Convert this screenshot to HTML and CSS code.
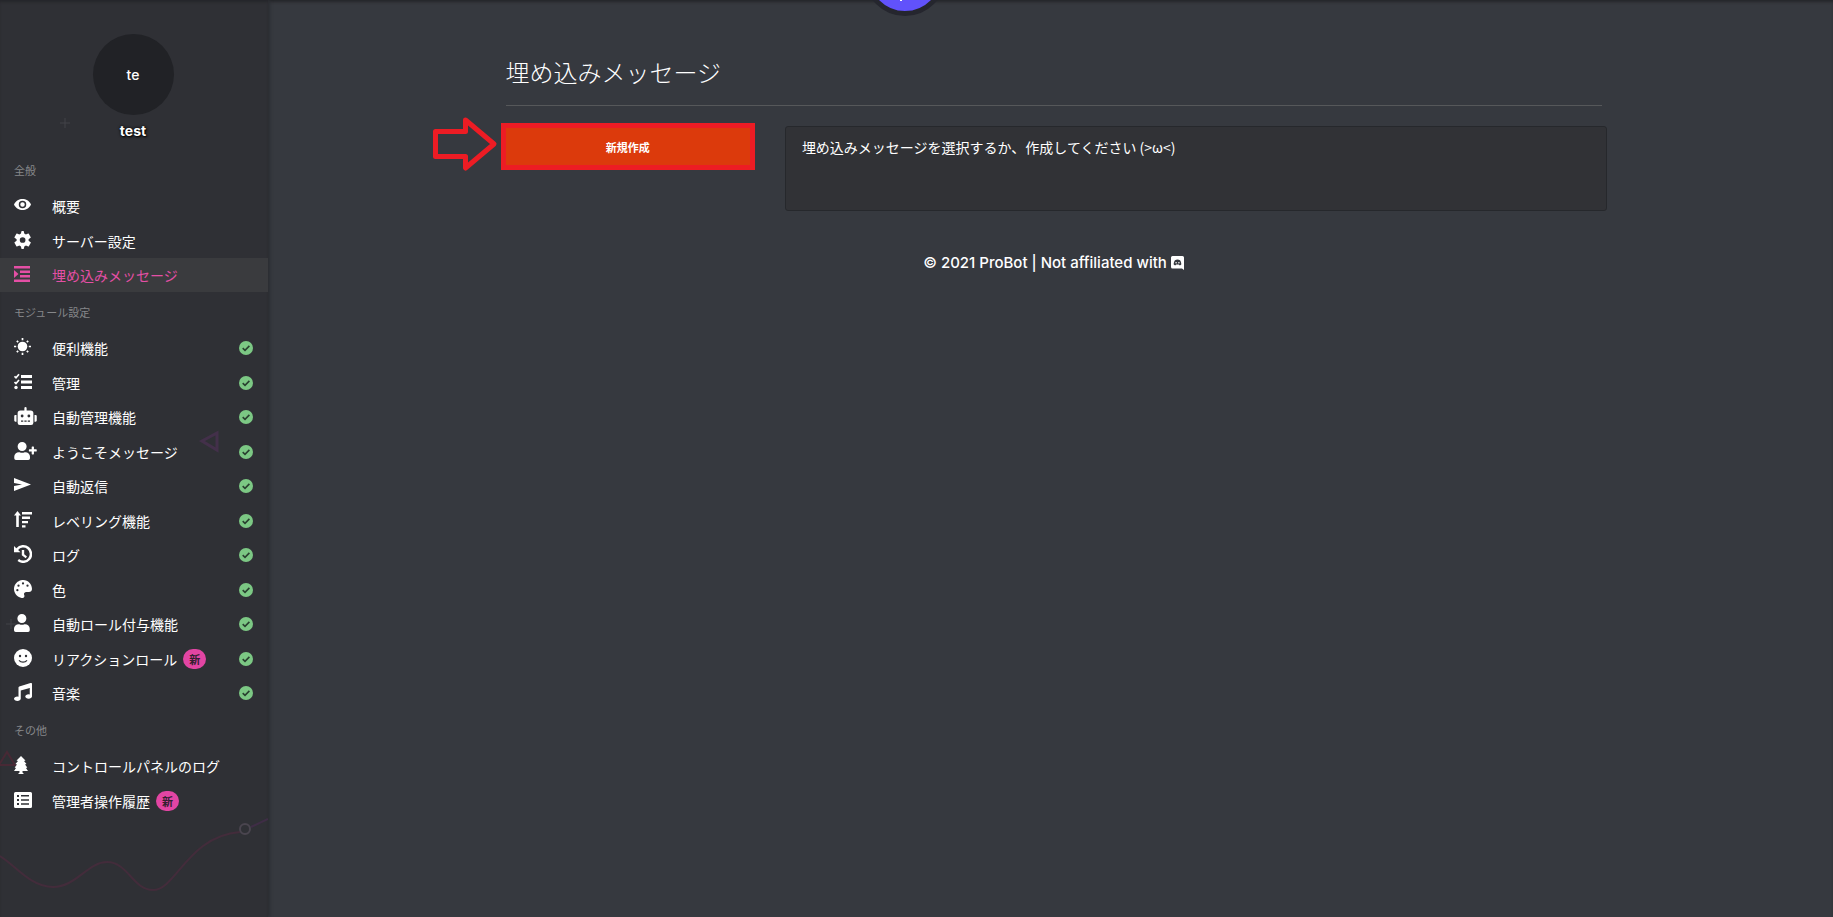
FILE: index.html
```html
<!DOCTYPE html>
<html lang="ja">
  <head>
    <meta charset="UTF-8" />
    <meta name="viewport" content="width=device-width, initial-scale=1.0" />
    <title>埋め込みメッセージ</title>
    <link rel="stylesheet" href="styles.css">
  </head>
  <body>
    <!-- shared status icon -->
    <svg class="defs" width="0" height="0">
      <symbol id="check" viewBox="0 0 14 14">
        <circle cx="7" cy="7" r="7" fill="#7cc884"/>
        <path d="M3.700 7.200l2.300 2.200 4.400-4.500" fill="none" stroke="#2a4030" stroke-width="1.600"/>
      </symbol>
    </svg>

    <div class="top-badge" aria-hidden="true"></div>

    <div class="wrapper">
      <aside class="sidebar">
        <svg class="doodles" width="268" height="917" viewBox="0 0 268 917" fill="none" aria-hidden="true">
          <path d="M65 118v10M60 123h10M11 619v10M6 624h10" stroke="#424348" stroke-width="1"/>
          <path d="M202 441l15-8v17z" stroke="#43304a" stroke-width="3"/>
          <path d="M-1 765l8-13 8 13z" stroke="#482935" stroke-width="2"/>
          <path d="M0 856C14 864 30 887 53 887C76 887 88 862 107 862C128 862 133 890 153 890C176 890 188 836 240 832" stroke="#432c3b" stroke-width="2"/>
          <path d="M251 827L268 819" stroke="#3f2d46" stroke-width="2"/>
          <circle cx="245" cy="829" r="5" stroke="#4a454f" stroke-width="2"/>
        </svg>

        <div class="guild">
          <div class="avatar">te</div>
          <div class="guild-name">test</div>
        </div>

        <nav>
          <h2 class="section">全般</h2>
          <ul class="menu">
            <li><a href="#">
              <svg class="icon" viewBox="0 0 18 18"><path d="M0 8.500C2 4.500 5 3 8.500 3S15 4.500 17 8.500C15 12.500 12 14 8.500 14S2 12.500 0 8.500z"/><circle cx="8.500" cy="8.500" r="3" fill="#fff" stroke="#2f3035" stroke-width="1.500"/></svg>
              <span class="label">概要</span>
            </a></li>
            <li><a href="#">
              <svg class="icon" viewBox="0 0 24 24"><path d="M19.400 13c0-.3.100-.6.100-1s0-.7-.1-1l2.700-2a.6.6 0 0 0 .2-.8l-2.600-4.500a.7.7 0 0 0-.8-.3l-3.100 1.300a8 8 0 0 0-2.200-1.300L13.200.6a.7.7 0 0 0-.7-.6h-2a.7.7 0 0 0-.7.600l-.5 2.800a8 8 0 0 0-2.200 1.300L4 3.400a.7.7 0 0 0-.8.300L.6 8.200A.6.6 0 0 0 .8 9l2.700 2a8 8 0 0 0 0 2L.8 15a.6.6 0 0 0-.2.800l2.600 4.500c.2.300.5.400.8.300l3.100-1.300a8 8 0 0 0 2.200 1.300l.5 2.800c0 .3.300.6.700.6h2c.4 0 .7-.3.7-.6l.5-2.800a8 8 0 0 0 2.200-1.300l3.100 1.300c.3.100.6 0 .8-.3l2.600-4.500a.6.6 0 0 0-.2-.8zM11.500 15.800a3.800 3.800 0 1 1 0-7.600 3.800 3.800 0 0 1 0 7.600z"/></svg>
              <span class="label">サーバー設定</span>
            </a></li>
            <li><a href="#" class="active" aria-current="page">
              <svg class="icon" viewBox="0 0 18 18"><path d="M0 1h16v2.500H0zM6 5.500h10V8H6zM6 10h10v2.500H6zM0 14.500h16V17H0zM0 5l4.500 4L0 13z"/></svg>
              <span class="label">埋め込みメッセージ</span>
            </a></li>
          </ul>

          <h2 class="section">モジュール設定</h2>
          <ul class="menu">
            <li><a href="#">
              <svg class="icon" viewBox="0 0 18 18"><circle cx="8.500" cy="8.500" r="4.800"/><path d="M8.500 0v2.200M8.500 14.800V17M0 8.500h2.200M14.800 8.500H17M2.800 2.800l1.400 1.400M12.800 12.800l1.400 1.400M2.800 14.200l1.400-1.400M12.800 4.200l1.400-1.400" stroke="currentColor" stroke-width="1.700"/></svg>
              <span class="label">便利機能</span><svg class="check"><use href="#check"/></svg>
            </a></li>
            <li><a href="#">
              <svg class="icon" viewBox="0 0 18 18"><path d="M7 2h11v3H7zM7 7.500h11v3H7zM7 13h11v3H7z"/><circle cx="2" cy="14.500" r="1.700"/><path d="M.5 3.300l1.500 1.500L5 1.300M.5 9l1.500 1.500L5 7" fill="none" stroke="currentColor" stroke-width="1.700"/></svg>
              <span class="label">管理</span><svg class="check"><use href="#check"/></svg>
            </a></li>
            <li><a href="#">
              <svg class="icon wide" viewBox="0 0 640 512"><path fill-rule="evenodd" d="M32 224h32v192H32a32 32 0 0 1-32-32V256a32 32 0 0 1 32-32zm512-48v272a64 64 0 0 1-64 64H160a64 64 0 0 1-64-64V176a80 80 0 0 1 80-80h112V32a32 32 0 0 1 64 0v64h112a80 80 0 0 1 80 80zM264 256a40 40 0 1 0-80 0 40 40 0 0 0 80 0zm-8 128h-64v32h64zm96 0h-64v32h64zm104-128a40 40 0 1 0-80 0 40 40 0 0 0 80 0zm-8 128h-64v32h64zm192-128v128a32 32 0 0 1-32 32h-32V224h32a32 32 0 0 1 32 32z"/></svg>
              <span class="label">自動管理機能</span><svg class="check"><use href="#check"/></svg>
            </a></li>
            <li><a href="#">
              <svg class="icon wide" viewBox="0 0 640 512"><path d="M624 208h-64v-64c0-9-7-16-16-16h-32c-9 0-16 7-16 16v64h-64c-9 0-16 7-16 16v32c0 9 7 16 16 16h64v64c0 9 7 16 16 16h32c9 0 16-7 16-16v-64h64c9 0 16-7 16-16v-32c0-9-7-16-16-16zM224 256a128 128 0 1 0 0-256 128 128 0 0 0 0 256zm90 32h-17a174 174 0 0 1-146 0h-17A134 134 0 0 0 0 422v42a48 48 0 0 0 48 48h352a48 48 0 0 0 48-48v-42a134 134 0 0 0-134-134z"/></svg>
              <span class="label">ようこそメッセージ</span><svg class="check"><use href="#check"/></svg>
            </a></li>
            <li><a href="#">
              <svg class="icon" viewBox="0 0 18 18"><path d="M0 2l17 6.500L0 15v-5l8-1.500L0 7z"/></svg>
              <span class="label">自動返信</span><svg class="check"><use href="#check"/></svg>
            </a></li>
            <li><a href="#">
              <svg class="icon" viewBox="0 0 18 18"><path d="M3.500 0L7 4.500H4.800V16H2.200V4.500H0zM8 1h10v2.500H8zM8 5.500h8V8H8zM8 10h6v2.300H8zM8 14.300h3.500v2.200H8z"/></svg>
              <span class="label">レベリング機能</span><svg class="check"><use href="#check"/></svg>
            </a></li>
            <li><a href="#">
              <svg class="icon" viewBox="0 0 18 18"><path d="M0 1l2.300 2.300A9 9 0 1 1 3.500 16L5 14A6.500 6.500 0 1 0 4.100 5L6.500 7.300H0zM7.800 5h2.400v4.300l2.800 2.100-1.300 1.900-3.900-3z"/></svg>
              <span class="label">ログ</span><svg class="check"><use href="#check"/></svg>
            </a></li>
            <li><a href="#">
              <svg class="icon" viewBox="0 0 512 512"><path fill-rule="evenodd" d="M204 5C105 24 25 104 5 203c-37 188 131 327 247 308 37-6 56-50 39-83-21-41 9-89 55-89h80c47 0 86-39 86-86C511 96 369-27 204 5zM96 320a32 32 0 1 1 0-64 32 32 0 0 1 0 64zm32-128a32 32 0 1 1 0-64 32 32 0 0 1 0 64zm128-64a32 32 0 1 1 0-64 32 32 0 0 1 0 64zm128 64a32 32 0 1 1 0-64 32 32 0 0 1 0 64z"/></svg>
              <span class="label">色</span><svg class="check"><use href="#check"/></svg>
            </a></li>
            <li><a href="#">
              <svg class="icon" viewBox="0 0 512 512"><path d="M224 256a128 128 0 1 0 0-256 128 128 0 0 0 0 256zm90 32h-17a174 174 0 0 1-146 0h-17A134 134 0 0 0 0 422v42a48 48 0 0 0 48 48h352a48 48 0 0 0 48-48v-42a134 134 0 0 0-134-134z"/></svg>
              <span class="label">自動ロール付与機能</span><svg class="check"><use href="#check"/></svg>
            </a></li>
            <li><a href="#">
              <svg class="icon" viewBox="0 0 18 18"><circle cx="9" cy="9" r="9"/><circle cx="6" cy="7" r="1.200" fill="#2f3035"/><circle cx="12" cy="7" r="1.200" fill="#2f3035"/><path d="M5 11.300c2 2.500 6 2.500 8 0" fill="none" stroke="#2f3035" stroke-width="1.200"/></svg>
              <span class="label">リアクションロール</span><span class="badge">新</span><svg class="check"><use href="#check"/></svg>
            </a></li>
            <li><a href="#">
              <svg class="icon" viewBox="0 0 512 512"><path d="M470 2L150 96a32 32 0 0 0-22 31v261a149 149 0 0 0-32-4c-53 0-96 29-96 64s43 64 96 64 96-29 96-64V214l256-75v185a149 149 0 0 0-32-4c-53 0-96 29-96 64s43 64 96 64 96-29 96-64V32a32 32 0 0 0-42-30z"/></svg>
              <span class="label">音楽</span><svg class="check"><use href="#check"/></svg>
            </a></li>
          </ul>

          <h2 class="section">その他</h2>
          <ul class="menu">
            <li><a href="#">
              <svg class="icon" viewBox="0 0 18 18"><path d="M7 0l4.500 4.500-1.500.5 2.500 3-1.500.6 2.300 2.900-1.300.5L14 15H8.500v1.500l1.500 1.500H4l1.500-1.500V15H0l2-3-1.300-.5L3 8.600 1.500 8 4 5l-1.500-.5z"/></svg>
              <span class="label">コントロールパネルのログ</span>
            </a></li>
            <li><a href="#">
              <svg class="icon" viewBox="0 0 18 18"><path fill-rule="evenodd" d="M1.500 1h15A1.500 1.500 0 0 1 18 2.500v13a1.500 1.500 0 0 1-1.500 1.500h-15A1.500 1.500 0 0 1 0 15.500v-13A1.500 1.500 0 0 1 1.500 1zM3 4v2h2V4zm4 0v1.500h8V4zM3 8v2h2V8zm4 .2v1.500h8V8.200zM3 12v2h2v-2zm4 .3v1.500h8v-1.500z"/></svg>
              <span class="label">管理者操作履歴</span><span class="badge">新</span>
            </a></li>
          </ul>
        </nav>
      </aside>

      <main class="content">
        <div class="container">
          <h1 class="title">埋め込みメッセージ</h1>
          <div class="row">
            <div class="side">
              <svg class="arrow" width="66" height="56" viewBox="0 0 66 56" fill="none" aria-hidden="true">
                <path d="M3.500 15.500h30V4L62 28 33.500 52V40.500h-30z" stroke="#ed1c24" stroke-width="5" stroke-linejoin="round"/>
              </svg>
              <button type="button" class="create">新規作成</button>
            </div>
            <div class="card">埋め込みメッセージを選択するか、作成してください (&gt;ω&lt;)</div>
          </div>
          <footer class="footer">
            © 2021 ProBot | Not affiliated with
            <svg width="13" height="14" viewBox="0 0 13 14" aria-label="Discord"><path fill="#fff" d="M1.500 0h10A1.500 1.500 0 0 1 13 1.500V14l-2-1.500H1.500A1.500 1.500 0 0 1 0 11V1.500A1.500 1.500 0 0 1 1.500 0z"/><path fill="#36393f" d="M4 4.200c1.500-.8 3.500-.8 5 0 .8 1 1.400 2.700 1.300 4.200-.6.600-1.300.9-2 .9l-.5-.8H5.200l-.5.800c-.7 0-1.400-.3-2-.9C2.600 6.900 3.200 5.200 4 4.200z"/><circle cx="5.100" cy="6.700" r=".8" fill="#fff"/><circle cx="7.900" cy="6.700" r=".8" fill="#fff"/></svg>
          </footer>
        </div>
      </main>
    </div>
  </body>
</html>
```
FILE: styles.css
```css
* {
  box-sizing: border-box;
}
body {
  margin: 0;
  background-color: #36393f;
  color: #fff;
  font-family: "Noto Sans CJK JP", sans-serif;
  font-size: 14px;
}
.defs {
  position: absolute;
}
.wrapper {
  display: flex;
  min-height: 100vh;
  box-shadow: inset 0 3px 3px -1px #25262a;
}
.top-badge {
  position: absolute;
  top: -66px;
  left: calc(50% - 53px);
  width: 82px;
  height: 82px;
  border: 5px solid #25262e;
  border-radius: 50%;
  background-color: #6152fb;
}
.top-badge::after {
  content: "";
  position: absolute;
  left: 31px;
  bottom: 10px;
  width: 2px;
  height: 6px;
  background-color: #fff;
}

/* sidebar */
.sidebar {
  position: relative;
  flex: none;
  width: 268px;
  padding-top: 34px;
  background-color: #2f3035;
  box-shadow: 2px 0 3px #2b2d32, inset 0 3px 3px -1px #25262a;
  overflow: hidden;
}
.doodles {
  position: absolute;
  top: 0;
  left: 0;
}
.guild, nav {
  position: relative;
}
.guild {
  display: flex;
  flex-direction: column;
  align-items: center;
  gap: 5px;
  padding: 0 2px 9px 0;
  font-family: Inter, sans-serif;
}
.avatar {
  display: flex;
  align-items: center;
  justify-content: center;
  width: 81px;
  height: 81px;
  border-radius: 50%;
  background-color: #212226;
  font-weight: 500;
}
.guild-name {
  font-weight: 700;
  line-height: 22px;
  text-shadow: 0 0 3px #000, 1px 1px 2px #000;
}
.section {
  margin: 0;
  padding-left: 14px;
  color: #86878a;
  font-size: 11px;
  font-weight: 400;
  line-height: 38px;
}
.menu {
  margin: 0;
  padding: 0;
  list-style: none;
}
.menu li:nth-child(odd) {
  margin-bottom: 1px;
}
.menu a {
  display: flex;
  align-items: center;
  padding: 6px 15px 6px 14px;
  color: #fff;
  line-height: 22px;
  text-decoration: none;
}
.menu a.active {
  background-color: #3a3b3e;
  color: #e44fa5;
}
.icon {
  width: 18px;
  height: 18px;
  margin: 0 20px 2px 0;
  fill: currentColor;
}
.icon.wide {
  width: 23px;
  margin-right: 15px;
}
.badge {
  margin-left: 6px;
  padding: 0 6px;
  border-radius: 10px;
  background-color: #e245a3;
  color: #33202f;
  font-size: 11px;
  font-weight: 700;
  line-height: 20px;
}
.check {
  width: 14px;
  height: 14px;
  margin-left: auto;
}

/* main column */
.content {
  flex: 1;
  min-width: 0;
  padding: 50px 0 0 6px;
}
.container {
  max-width: 1106px;
  margin: 0 auto;
}
.title {
  margin: 0 5px 17px;
  padding-bottom: 11px;
  border-bottom: 1px solid #56585a;
  font-size: 24px;
  font-weight: 300;
  line-height: 44px;
}
.row {
  display: flex;
  align-items: flex-start;
  gap: 30px;
}
.side {
  position: relative;
  flex: 0 0 23%;
}
.arrow {
  position: absolute;
  right: 100%;
  top: -7px;
  margin-right: 3px;
}
.create {
  display: block;
  width: 100%;
  height: 47px;
  border: 5px solid #ed1c24;
  background-color: #dc3a0c;
  color: #fff;
  font-family: inherit;
  font-size: 11px;
  font-weight: 700;
}
.card {
  flex: 1;
  min-height: 85px;
  margin-top: 3px;
  padding: 9px 16px;
  border: 1px solid #26282c;
  border-radius: 3px;
  background-color: #313236;
  line-height: 22px;
}
.footer {
  margin-top: 41px;
  font-family: Inter, sans-serif;
  font-size: 15px;
  font-weight: 500;
  line-height: 22px;
  text-align: center;
}
.footer svg {
  vertical-align: -2px;
}
```
